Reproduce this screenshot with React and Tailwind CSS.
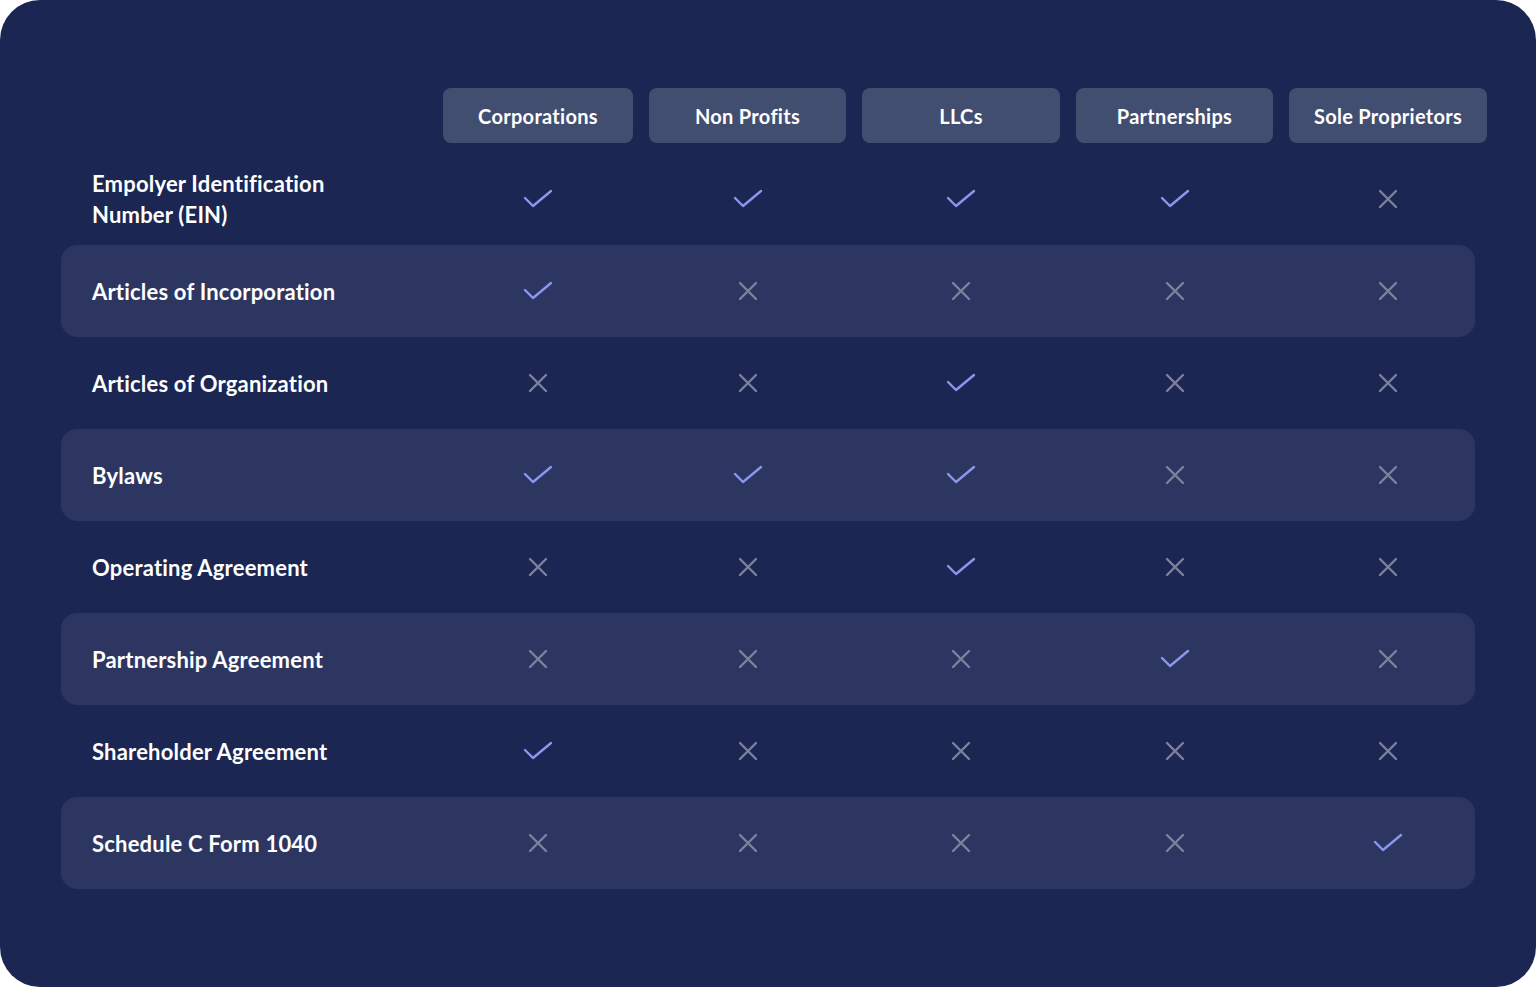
const cols = ["Corporations","Non Profits","LLCs","Partnerships","Sole Proprietors"];
const rows = [
  [["Empolyer Identification","Number (EIN)"],[1,1,1,1,0]],
  [["Articles of Incorporation"],[1,0,0,0,0]],
  [["Articles of Organization"],[0,0,1,0,0]],
  [["Bylaws"],[1,1,1,0,0]],
  [["Operating Agreement"],[0,0,1,0,0]],
  [["Partnership Agreement"],[0,0,0,1,0]],
  [["Shareholder Agreement"],[1,0,0,0,0]],
  [["Schedule C Form 1040"],[0,0,0,0,1]],
];
const grid = "grid grid-cols-[366px_190px_197px_198px_197px_198px] gap-x-4 w-[1414px]";
const Check = () => (
  <svg width="30" height="20" viewBox="0 0 30 20" fill="none"><path d="M2 9l8 8L28 2" stroke="#8b97ee" strokeWidth="2.4" strokeLinecap="round" strokeLinejoin="round"/></svg>
);
const Cross = () => (
  <svg width="20" height="20" viewBox="0 0 20 20" fill="none"><path d="M2 2l16 16M18 2L2 18" stroke="#7c819d" strokeWidth="2.4" strokeLinecap="round"/></svg>
);
export default function App() {
  return (
    <div className="w-[1536px] h-[987px] bg-white" style={{fontFamily:"Lato, 'Noto Sans', sans-serif"}}>
      <div className="w-full h-full bg-[#1b2652] rounded-[40px] pt-[88px] pl-[61px]">
        <div className={grid + " h-[55px] mb-[10px]"}>
          <div />
          {cols.map(c => (
            <div key={c} className="bg-[#424e70] rounded-lg flex items-center justify-center text-white text-[20px] font-bold tracking-[0.3px]">{c}</div>
          ))}
        </div>
        {rows.map(([label, vals], i) => (
          <div key={i} className={grid + " h-[92px] items-center rounded-2xl " + (i % 2 ? "bg-[#2c3661]" : "")}>
            <div className="pl-[31px] text-white text-[22px] font-bold leading-[31px] tracking-[0.2px]">
              {label.map(l => <div key={l}>{l}</div>)}
            </div>
            {vals.map((v, j) => (
              <div key={j} className="flex justify-center">{v ? <Check /> : <Cross />}</div>
            ))}
          </div>
        ))}
      </div>
    </div>
  );
}
